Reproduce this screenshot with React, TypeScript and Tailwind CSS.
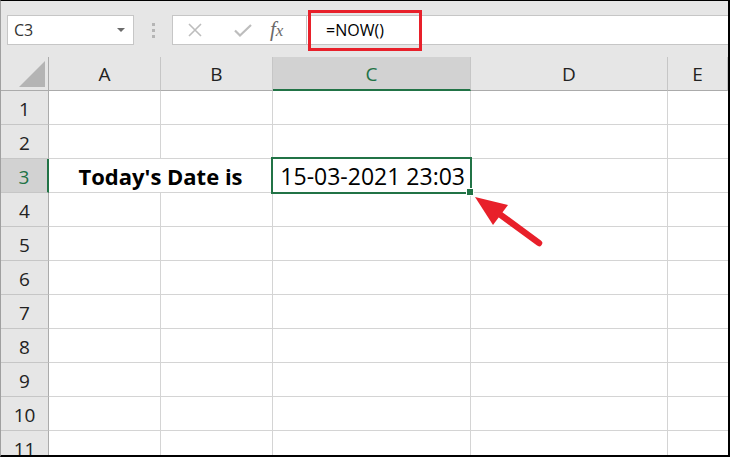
import { Fragment } from 'react'

const cols = ['A', 'B', 'C', 'D', 'E']
const rows = [1, 2, 3, 4, 5, 6, 7, 8, 9, 10, 11]

const font = { fontFamily: '"Open Sans", "Liberation Sans", sans-serif' }

function Toolbar() {
  return (
    <div className="flex h-[56px] items-start pl-[6px] pt-[14px]">
      <div className="flex h-[30px] w-[127px] items-center justify-between border border-[#c6c6c6] bg-white pl-[6px] pr-[8px]">
        <span className="text-[16px] text-[#333]">C3</span>
        <span className="h-0 w-0 border-x-[4px] border-t-[4px] border-x-transparent border-t-[#6b6b6b]" />
      </div>
      <div className="flex h-[30px] w-[38px] flex-col items-center justify-center gap-[3px]">
        <span className="h-[3px] w-[3px] bg-[#b5b5b5]" />
        <span className="h-[3px] w-[3px] bg-[#b5b5b5]" />
        <span className="h-[3px] w-[3px] bg-[#b5b5b5]" />
      </div>
      <div className="flex h-[30px] w-[135px] items-center border border-[#c6c6c6] bg-white">
        <svg width="16" height="16" viewBox="0 0 16 16" className="ml-[14px]">
          <path d="M2 2 L14 14 M14 2 L2 14" stroke="#bdbdbd" strokeWidth="1.6" fill="none" />
        </svg>
        <svg width="20" height="16" viewBox="0 0 20 16" className="ml-[30px]">
          <path d="M2 8.5 L7 13.5 L18 3" stroke="#bdbdbd" strokeWidth="2.2" fill="none" />
        </svg>
        <span
          className="ml-[17px] text-[21px] italic text-[#6a6a6a]"
          style={{ fontFamily: '"Liberation Serif", serif' }}
        >
          f<span className="text-[17px]">x</span>
        </span>
      </div>
      <div className="relative flex h-[30px] flex-1 items-center border-y border-[#c6c6c6] bg-white pl-[19px]">
        <span className="text-[16px] text-black">=NOW()</span>
        <div className="absolute left-[1px] top-[-6px] h-[41px] w-[114px] border-[3px] border-[#e8202a]" />
      </div>
    </div>
  )
}

function Grid() {
  return (
    <div className="grid grid-cols-[48px_112px_112px_198px_197px_1fr] auto-rows-[34px]">
      <div className="relative border-b border-r border-[#ababab]">
        <svg width="27" height="26" viewBox="0 0 27 26" className="absolute left-[18px] top-[4px]">
          <path d="M26 0 L26 26 L0 26 Z" fill="#b4b4b4" />
        </svg>
      </div>
      {cols.map((c) => (
        <div
          key={c}
          className={`flex items-center justify-center border-b border-r pt-[2px] text-[19px] ${
            c === 'C'
              ? 'border-r-[#c6c6c6] border-b-[#217346] border-b-2 bg-[#d2d2d2] text-[#217346]'
              : 'border-b-[#ababab] border-r-[#c6c6c6] text-[#222]'
          }`}
        >
          {c}
        </div>
      ))}
      {rows.map((r) => (
        <Fragment key={r}>
          <div
            className={`flex items-center justify-center border-b pt-[3px] text-[19px] ${
              r === 3
                ? 'border-b-[#c6c6c6] border-r-2 border-r-[#217346] bg-[#d2d2d2] text-[#217346]'
                : 'border-b-[#c6c6c6] border-r border-r-[#ababab] text-[#222]'
            }`}
          >
            {r}
          </div>
          {r === 3 ? (
            <>
              <div className="col-span-2 flex items-center justify-center border-b border-r border-[#d4d4d4] bg-white pt-[2px] text-[22px] font-bold text-black">
                Today's Date is
              </div>
              <div className="relative flex items-center justify-end border-b border-r border-[#d4d4d4] bg-white pr-[5px] pt-[2px] text-[23px] text-black">
                15-03-2021 23:03
                <div className="absolute inset-[-2px] border-2 border-[#217346]" />
                <div className="absolute bottom-[-4px] right-[-4px] h-[8px] w-[8px] border border-white bg-[#217346]" />
              </div>
            </>
          ) : (
            <>
              <div className="border-b border-r border-[#d4d4d4] bg-white" />
              <div className="border-b border-r border-[#d4d4d4] bg-white" />
              <div className="border-b border-r border-[#d4d4d4] bg-white" />
            </>
          )}
          <div className="border-b border-r border-[#d4d4d4] bg-white" />
          <div className="border-b border-[#d4d4d4] bg-white" />
        </Fragment>
      ))}
    </div>
  )
}

export default function App() {
  return (
    <div
      className="relative h-[457px] w-[730px] overflow-hidden border-b-2 border-l border-r-2 border-t border-b-black border-l-[#a0a0a0] border-r-black border-t-black bg-[#e6e6e6]"
      style={font}
    >
      <Toolbar />
      <Grid />
      <svg
        width="90"
        height="70"
        viewBox="0 0 90 70"
        className="absolute left-[459px] top-[184px]"
      >
        <path d="M15 12 L48 20 L33 40 Z" fill="#e8202a" />
        <path d="M38 28 L79 58" stroke="#e8202a" strokeWidth="6.5" strokeLinecap="round" />
      </svg>
    </div>
  )
}
